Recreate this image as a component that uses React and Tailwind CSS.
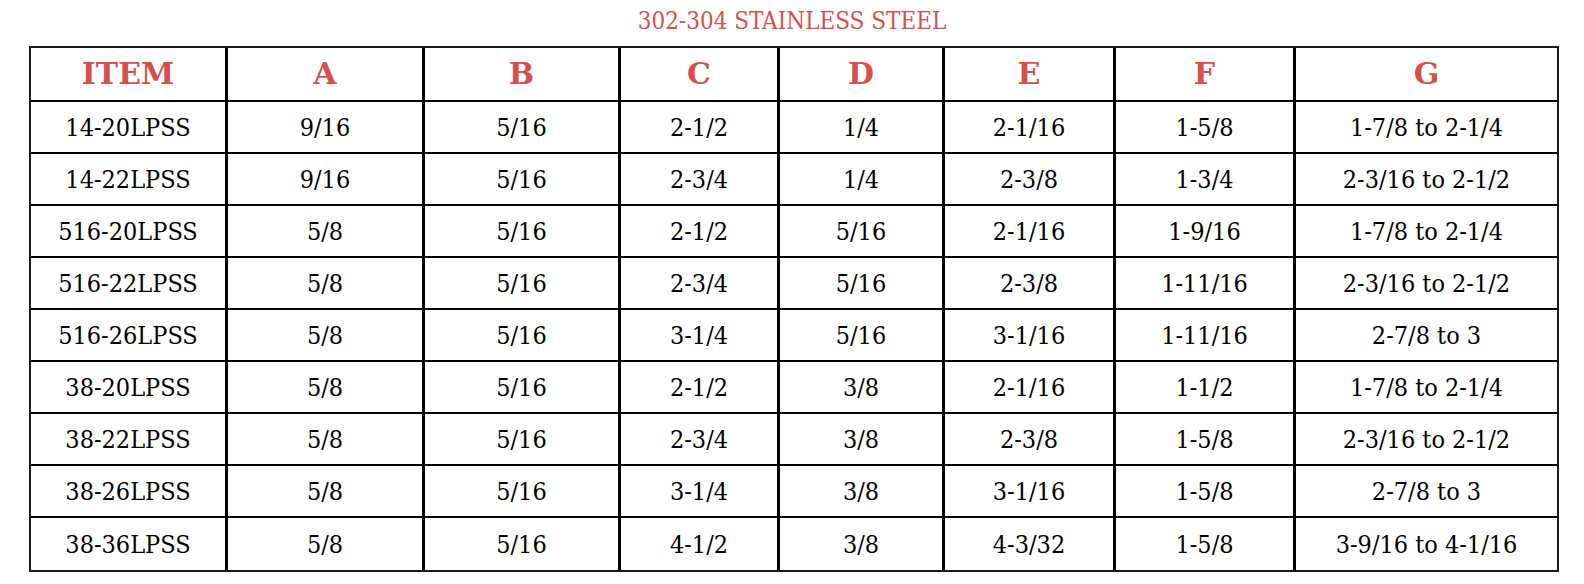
import React from "react";

const headers = ["ITEM", "A", "B", "C", "D", "E", "F", "G"];
const rows = [
  ["14-20LPSS", "9/16", "5/16", "2-1/2", "1/4", "2-1/16", "1-5/8", "1-7/8 to 2-1/4"],
  ["14-22LPSS", "9/16", "5/16", "2-3/4", "1/4", "2-3/8", "1-3/4", "2-3/16 to 2-1/2"],
  ["516-20LPSS", "5/8", "5/16", "2-1/2", "5/16", "2-1/16", "1-9/16", "1-7/8 to 2-1/4"],
  ["516-22LPSS", "5/8", "5/16", "2-3/4", "5/16", "2-3/8", "1-11/16", "2-3/16 to 2-1/2"],
  ["516-26LPSS", "5/8", "5/16", "3-1/4", "5/16", "3-1/16", "1-11/16", "2-7/8 to 3"],
  ["38-20LPSS", "5/8", "5/16", "2-1/2", "3/8", "2-1/16", "1-1/2", "1-7/8 to 2-1/4"],
  ["38-22LPSS", "5/8", "5/16", "2-3/4", "3/8", "2-3/8", "1-5/8", "2-3/16 to 2-1/2"],
  ["38-26LPSS", "5/8", "5/16", "3-1/4", "3/8", "3-1/16", "1-5/8", "2-7/8 to 3"],
  ["38-36LPSS", "5/8", "5/16", "4-1/2", "3/8", "4-3/32", "1-5/8", "3-9/16 to 4-1/16"],
];

const widths = ["w-[197px]", "w-[197px]", "w-[196px]", "w-[159px]", "w-[165px]", "w-[171px]", "w-[180px]", "w-[261px]"];

export default function App() {
  return (
    <div className="w-[1584px] h-[584px] bg-white font-['DejaVu_Serif_Condensed','DejaVu_Serif',serif] font-stretch-condensed">
      <div className="h-[46px] pt-[6px] text-center text-[24px] leading-[30px] text-[#d5504c]">
        302-304 STAINLESS STEEL
      </div>
      <div className="ml-[29px] w-[1530px] border-2 border-[#1a1a1a]">
        <table className="border-separate border-spacing-0 table-fixed w-[1526px]">
          <colgroup>
            {widths.map((w, i) => (
              <col key={i} className={w} />
            ))}
          </colgroup>
          <thead>
            <tr>
              {headers.map((h, i) => (
                <th
                  key={h}
                  className={`h-[54px] p-0 text-center align-middle font-['DejaVu_Serif',serif] font-bold [font-stretch:normal] text-[30px] leading-none text-[#d5504c] border-b-2 border-black ${
                    i < headers.length - 1 ? "border-r-[3px]" : ""
                  }`}
                >
                  {h}
                </th>
              ))}
            </tr>
          </thead>
          <tbody>
            {rows.map((r, ri) => (
              <tr key={ri}>
                {r.map((c, ci) => (
                  <td
                    key={ci}
                    className={`h-[52px] p-0 text-center align-middle text-[25px] leading-none text-black border-black ${
                      ci < r.length - 1 ? "border-r-[3px]" : ""
                    } ${ri < rows.length - 1 ? "border-b-2" : ""}`}
                  >
                    {c}
                  </td>
                ))}
              </tr>
            ))}
          </tbody>
        </table>
      </div>
    </div>
  );
}
